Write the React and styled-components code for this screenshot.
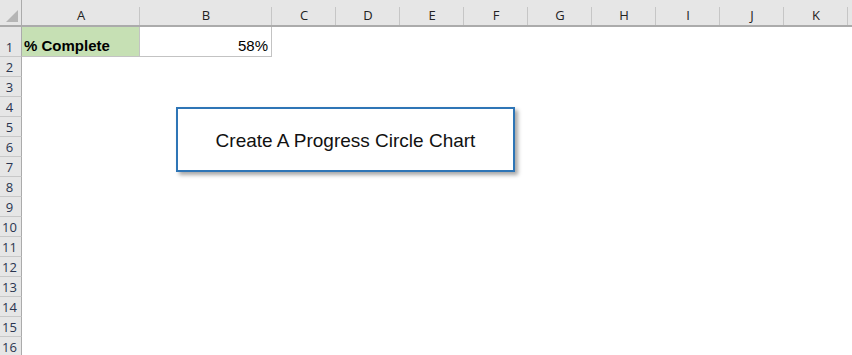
import React from 'react';
import styled, { createGlobalStyle } from 'styled-components';

const GlobalStyle = createGlobalStyle`
  html, body {
    margin: 0;
    padding: 0;
    background: #ffffff;
    overflow: hidden;
  }
`;

const COLUMNS = [
  { id: 'A', width: 118 },
  { id: 'B', width: 132 },
  { id: 'C', width: 64 },
  { id: 'D', width: 64 },
  { id: 'E', width: 64 },
  { id: 'F', width: 64 },
  { id: 'G', width: 64 },
  { id: 'H', width: 64 },
  { id: 'I', width: 64 },
  { id: 'J', width: 64 },
  { id: 'K', width: 64 },
  { id: 'L', width: 64, hidden: true },
];

const ROWS = Array.from({ length: 16 }, (_, i) => i + 1);

const Sheet = styled.div`
  position: relative;
  width: 852px;
  height: 355px;
  overflow: hidden;
  font-family: 'Open Sans', 'Noto Sans', sans-serif;
`;

const Grid = styled.div`
  display: grid;
  grid-template-columns: 22px ${COLUMNS.map((c) => `${c.width}px`).join(' ')};
  grid-template-rows: 27px 30px repeat(16, 20px);
`;

const Corner = styled.div`
  position: relative;
  background: #e6e6e6;
  border-right: 1px solid #ababab;
  border-bottom: 2px solid #ababab;
  box-sizing: border-box;

  &::after {
    content: '';
    position: absolute;
    right: 3px;
    bottom: 3px;
    width: 0;
    height: 0;
    border-left: 12px solid transparent;
    border-bottom: 12px solid #b5b5b5;
  }
`;

const ColHead = styled.div`
  position: relative;
  display: flex;
  align-items: center;
  justify-content: center;
  padding-top: 5px;
  background: #e6e6e6;
  border-bottom: 2px solid #ababab;
  box-sizing: border-box;
  font-size: 13px;
  color: #222;

  &::after {
    content: '';
    position: absolute;
    right: 0;
    top: 7px;
    bottom: 0;
    width: 1px;
    background: #c6c6c6;
  }
`;

const RowHead = styled.div`
  display: flex;
  align-items: flex-end;
  justify-content: center;
  padding-bottom: 0;
  padding-right: 2px;
  background: #e6e6e6;
  border-right: 1px solid #ababab;
  border-bottom: 1px solid #c8c8c8;
  box-sizing: border-box;
  font-size: 13px;
  color: #2a3550;
`;

const Cell = styled.div`
  display: flex;
  align-items: flex-end;
  justify-content: ${(p) => (p.$align === 'right' ? 'flex-end' : 'flex-start')};
  padding: 0 3px 2px 2px;
  box-sizing: border-box;
  background: ${(p) => p.$fill || '#ffffff'};
  border-right: ${(p) => (p.$bordered ? '1px solid #c3c3c3' : 'none')};
  border-bottom: ${(p) => (p.$bordered ? '1px solid #c3c3c3' : 'none')};
  font-family: 'Liberation Sans', Arial, sans-serif;
  font-size: 15px;
  font-weight: ${(p) => (p.$bold ? 700 : 400)};
  color: #000;
  white-space: nowrap;
`;

const Shape = styled.div`
  position: absolute;
  left: 176px;
  top: 107px;
  width: 339px;
  height: 65px;
  box-sizing: border-box;
  display: flex;
  align-items: center;
  justify-content: center;
  padding-top: 2px;
  background: #ffffff;
  border: 2px solid #2e75b6;
  box-shadow: 3px 3px 4px rgba(0, 0, 0, 0.35);
  font-family: 'Liberation Sans', Arial, sans-serif;
  font-size: 19px;
  color: #111;
`;

const data = {
  1: {
    A: { text: '% Complete', bold: true, fill: '#c6e0b4', bordered: true },
    B: { text: '58%', align: 'right', bordered: true },
  },
};

export default function App() {
  return (
    <>
      <GlobalStyle />
      <Sheet>
        <Grid>
          <Corner />
          {COLUMNS.map((c) => (
            <ColHead key={c.id}>{c.hidden ? '' : c.id}</ColHead>
          ))}
          {ROWS.map((r) => (
            <React.Fragment key={r}>
              <RowHead>{r}</RowHead>
              {COLUMNS.map((c) => {
                const cell = (data[r] && data[r][c.id]) || {};
                return (
                  <Cell
                    key={c.id}
                    $bold={cell.bold}
                    $fill={cell.fill}
                    $align={cell.align}
                    $bordered={cell.bordered}
                  >
                    {cell.text}
                  </Cell>
                );
              })}
            </React.Fragment>
          ))}
        </Grid>
        <Shape>Create A Progress Circle Chart</Shape>
      </Sheet>
    </>
  );
}
